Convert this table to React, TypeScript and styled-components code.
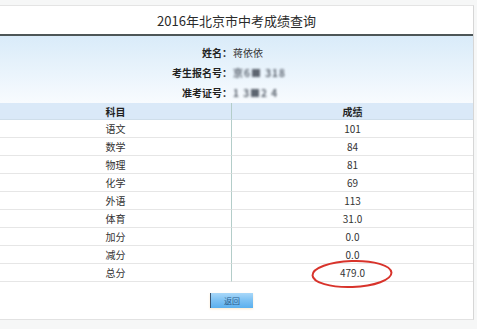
import { Fragment } from 'react'
import styled, { createGlobalStyle } from 'styled-components'

const GlobalStyle = createGlobalStyle`
    html, body {
        margin: 0;
        padding: 0;
        background: #f6f7f7;
    }
    body {
        font-family: "Noto Sans CJK SC", "Noto Sans", sans-serif;
        color: #333;
    }
`

const PageStyled = styled.div`
    padding-top: 5px;
    width: 477px;
    height: 329px;
    box-sizing: border-box;
`

const PanelStyled = styled.div`
    width: 474px;
    background: #fff;
    border-top: 1px solid #e4e4e4;
    border-right: 1px solid #d6d6d6;
    border-bottom: 1px solid #e2e2e2;
    box-sizing: border-box;
`

const TitleBarStyled = styled.div`
    height: 28px;
    display: flex;
    align-items: center;
    justify-content: center;
    font-size: 13px;
    color: #2a2a2a;
    border-bottom: 2px solid #4d5657;
`

const InfoStyled = styled.div`
    display: grid;
    grid-template-columns: 232px 1fr;
    grid-auto-rows: 20px;
    align-items: center;
    padding: 6px 0 1px;
    font-size: 10px;
    background: linear-gradient(to bottom, #d9ebf9 0%, #eaf4fc 55%, #f8fbfe 100%);
`

const LabelStyled = styled.span`
    text-align: right;
    font-weight: bold;
    color: #222;
`

const ValueStyled = styled.span<{ $blur?: boolean }>`
    padding-left: 1px;
    color: ${({ $blur }) => $blur ? '#5d6570' : '#333'};
    font-weight: ${({ $blur }) => $blur ? 'bold' : 'normal'};
    letter-spacing: ${({ $blur }) => $blur ? '1px' : '0'};
    filter: ${({ $blur }) => $blur ? 'blur(1.2px)' : 'none'};
`

const ScoreTableStyled = styled.div`
    display: grid;
    grid-template-columns: 232px 1fr;
    font-size: 10px;
`

const CellStyled = styled.div<{ $head?: boolean; $left?: boolean }>`
    position: relative;
    height: ${({ $head }) => $head ? '17px' : '18px'};
    display: flex;
    align-items: center;
    justify-content: center;
    box-sizing: border-box;
    background: ${({ $head }) => $head ? '#dae9f8' : '#fff'};
    font-weight: ${({ $head }) => $head ? 'bold' : 'normal'};
    color: ${({ $head }) => $head ? '#1f1f1f' : '#333'};
    border-bottom: 1px solid ${({ $head }) => $head ? '#cfdeea' : '#e6e6e6'};
    border-right: ${({ $left }) => $left ? '1px solid #b3cdc9' : 'none'};
`

const MarkStyled = styled.svg`
    position: absolute;
    left: 79px;
    top: -5px;
    overflow: visible;
    pointer-events: none;
`

const FooterStyled = styled.div`
    height: 37px;
    display: flex;
    justify-content: center;
    align-items: flex-start;
    padding: 11px 10px 0 0;
    box-sizing: border-box;
`

const BackButtonStyled = styled.button`
    width: 43px;
    height: 15px;
    padding: 0;
    border: none;
    border-left: 1px solid #3c5570;
    background: linear-gradient(to bottom, #a9d8f9 0%, #7cc1f3 50%, #5bb0ee 100%);
    font-family: "Noto Sans CJK SC", sans-serif;
    font-size: 8px;
    color: #2b5d8c;
    line-height: 15px;
    box-shadow: 0 1px 2px rgba(250, 220, 170, 0.6);
    cursor: pointer;
`

const scores = [
    { subject: '语文', score: '101' },
    { subject: '数学', score: '84' },
    { subject: '物理', score: '81' },
    { subject: '化学', score: '69' },
    { subject: '外语', score: '113' },
    { subject: '体育', score: '31.0' },
    { subject: '加分', score: '0.0' },
    { subject: '减分', score: '0.0' },
    { subject: '总分', score: '479.0' },
]

export default function App() {
    return (
        <>
            <GlobalStyle />
            <PageStyled>
                <PanelStyled>
                    <TitleBarStyled>2016年北京市中考成绩查询</TitleBarStyled>
                    <InfoStyled>
                        <LabelStyled>姓名：</LabelStyled>
                        <ValueStyled>蒋依依</ValueStyled>
                        <LabelStyled>考生报名号：</LabelStyled>
                        <ValueStyled $blur>京6■ 318</ValueStyled>
                        <LabelStyled>准考证号：</LabelStyled>
                        <ValueStyled $blur>1 3■2 4</ValueStyled>
                    </InfoStyled>
                    <ScoreTableStyled>
                        <CellStyled $head $left>科目</CellStyled>
                        <CellStyled $head>成绩</CellStyled>
                        {scores.map((row) => (
                            <Fragment key={row.subject}>
                                <CellStyled $left>{row.subject}</CellStyled>
                                <CellStyled>
                                    {row.score}
                                    {row.subject === '总分' &&
                                        <MarkStyled width="82" height="30" viewBox="0 0 82 30">
                                            <ellipse
                                                cx="41" cy="15" rx="39.5" ry="13"
                                                fill="none" stroke="#d8332b" strokeWidth="2"
                                                transform="rotate(-2 41 15)"
                                            />
                                        </MarkStyled>}
                                </CellStyled>
                            </Fragment>
                        ))}
                    </ScoreTableStyled>
                    <FooterStyled>
                        <BackButtonStyled>返回</BackButtonStyled>
                    </FooterStyled>
                </PanelStyled>
            </PageStyled>
        </>
    )
}
